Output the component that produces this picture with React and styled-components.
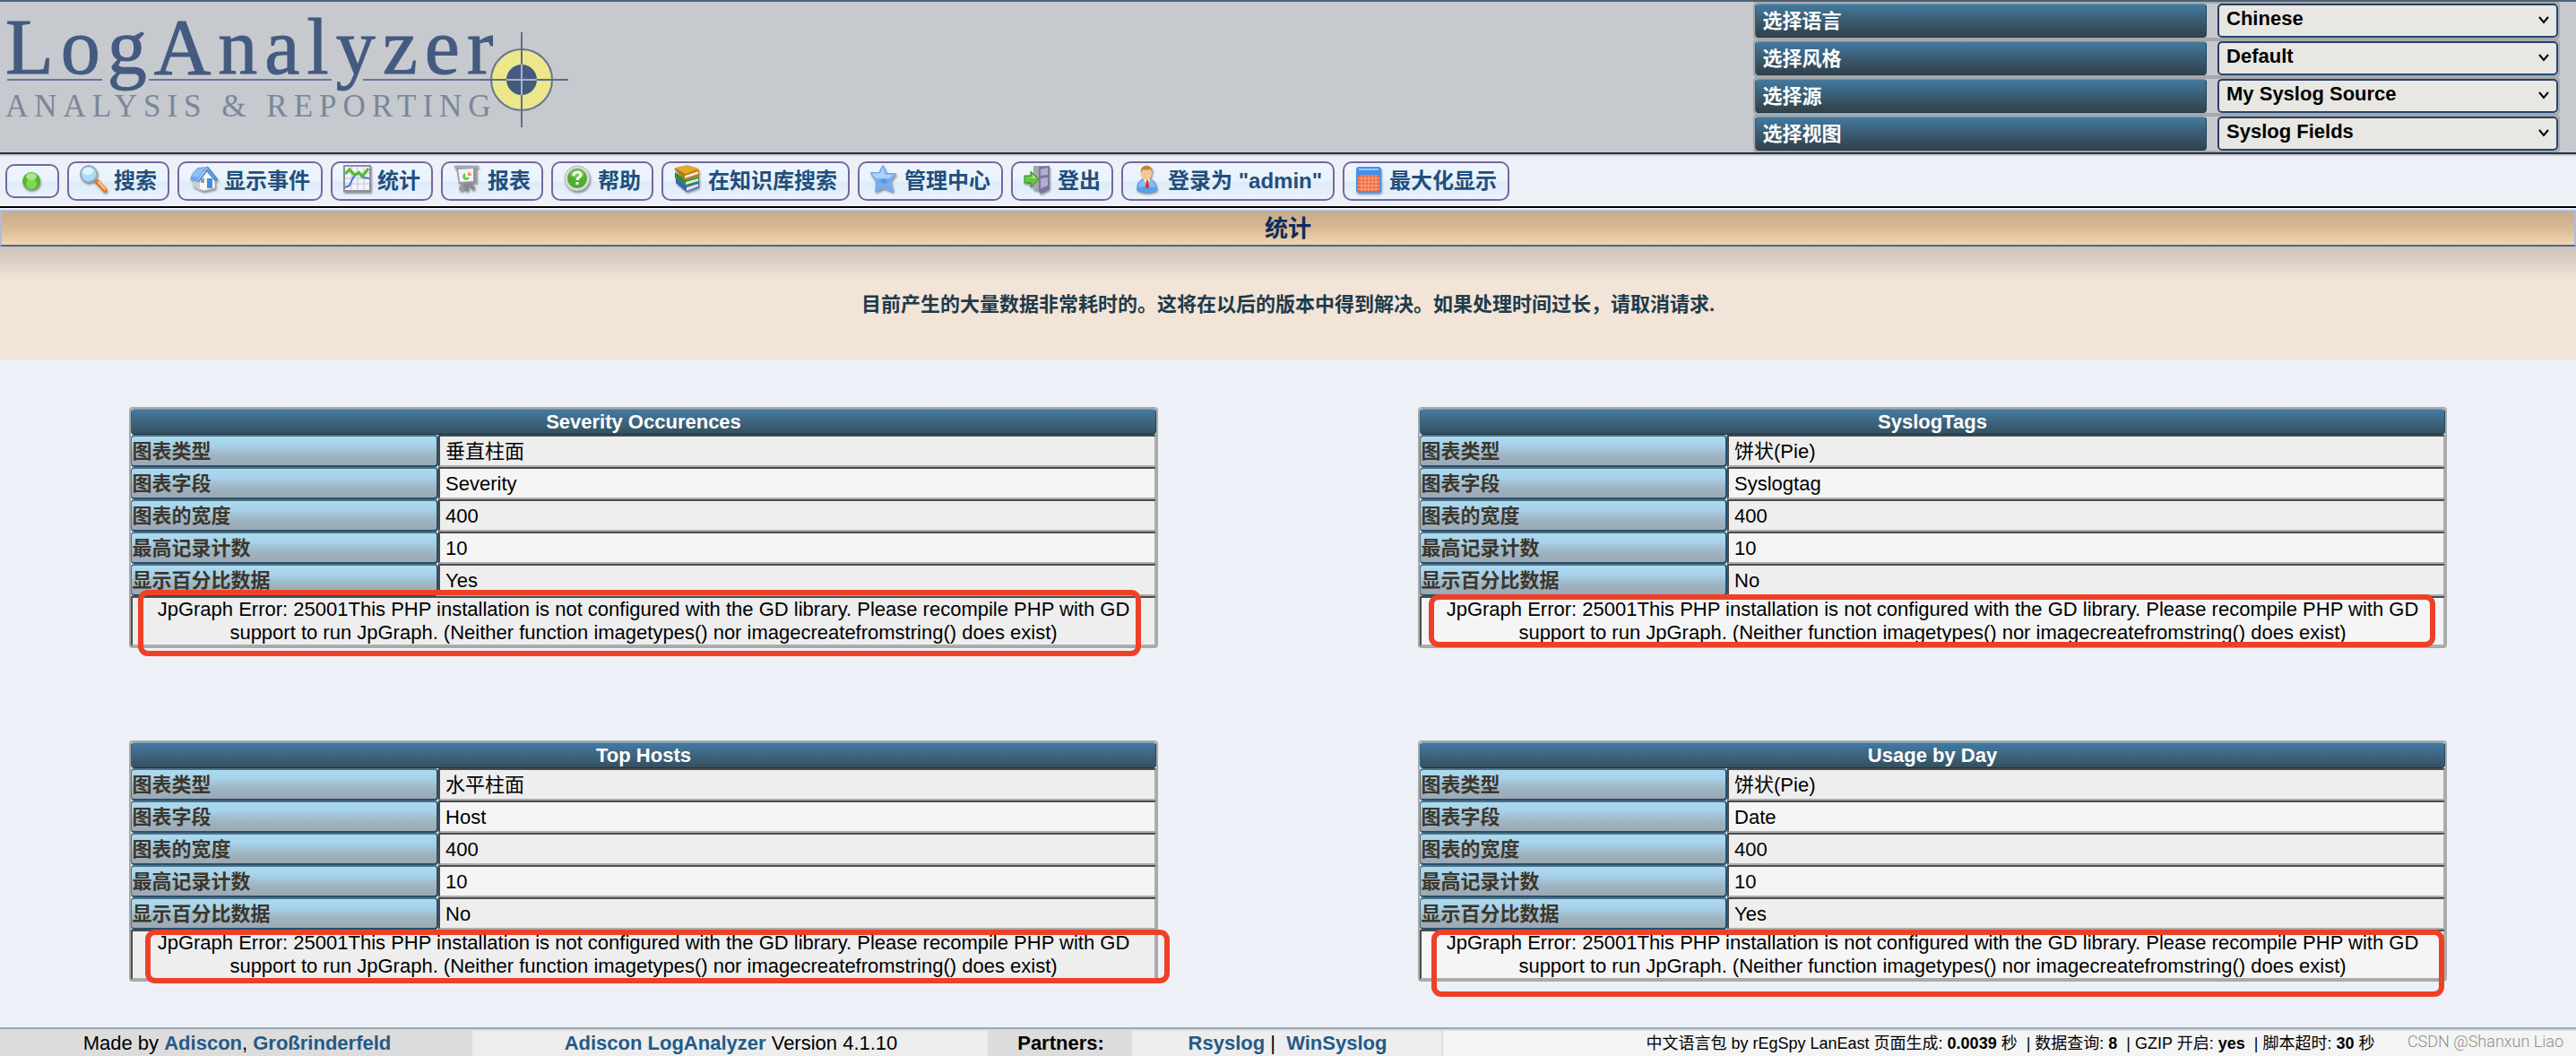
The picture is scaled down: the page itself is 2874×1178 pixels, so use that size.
import React from "react";
import styled, { createGlobalStyle } from "styled-components";

const GlobalStyle = createGlobalStyle`
  * {
    box-sizing: border-box;
  }
  body {
    margin: 0;
    background-color: #edf0f6;
    color: black;
    font-family: "Liberation Sans", "Noto Sans CJK SC", sans-serif;
    font-size: 22px;
    line-height: 26px;
  }
`;

const TopBar = styled.header`
  display: flex;
  justify-content: space-between;
  background-color: #c6c9ce;
  border-top: 2px solid #4b6178;
  border-bottom: 2px solid #222f44;
  padding-right: 18px;
`;
const LogoSvg = styled.svg`
  width: 660px;
  height: 168px;
`;
const LogoName = styled.text`
  font-family: "Liberation Serif", serif;
  font-size: 88px;
  letter-spacing: 8px;
  fill: #455a80;
  stroke: #455a80;
  stroke-width: 1px;
`;
const LogoTagline = styled.text`
  font-family: "Liberation Serif", serif;
  font-size: 35px;
  letter-spacing: 7px;
  fill: #7b8799;
`;

const Selectors = styled.div`
  width: 31.5%;
`;
const SelectorRow = styled.div`
  display: grid;
  grid-template-columns: 57fr 43fr;
  gap: 12px;
  height: 42px;
  border: 2px solid #a8a8a8;
  border-radius: 4px;
  background-color: #c6c9ce;
`;
const SelectorLabel = styled.label`
  display: flex;
  align-items: center;
  padding: 2px 7px 0;
  border: 1px solid;
  border-color: #6e9bb4 #1b4763 #16384f #2f627f;
  border-radius: 4px;
  background: linear-gradient(#437aa1, #3a5c72 50%, #344550 90%);
  color: white;
  font-weight: bold;
`;
const SelectBox = styled.div`
  position: relative;
  display: flex;
  svg {
    position: absolute;
    right: 9px;
    top: 14px;
    width: 14px;
    height: 9px;
    pointer-events: none;
  }
`;
const Select = styled.select`
  appearance: none;
  width: 100%;
  padding: 0 30px 6px 8px;
  border: 2px solid;
  border-color: #2c3e60 #1f4878 #1f4878 #2c3e60;
  border-radius: 5px;
  background-color: #e8e7e3;
  color: black;
  font-family: inherit;
  font-size: 22px;
  font-weight: bold;
`;

const Menu = styled.nav`
  display: flex;
  align-items: center;
  gap: 9px;
  height: 60px;
  padding: 0 6px;
  border-top: 2px solid #cccccc;
  border-bottom: 2px solid black;
`;
const MenuButton = styled.a`
  display: flex;
  align-items: center;
  gap: 6px;
  height: ${props => props.$small ? "38px" : "44px"};
  padding: 0 ${props => props.$small ? "16px" : "12px"};
  border: 2px solid #7468a0;
  border-radius: 10px;
  background: linear-gradient(#edf5fd, #eaf3fb 50%, #deebf8 54%, #e9f3fd);
  color: #1f4f7d;
  font-size: 24px;
  font-weight: bold;
  text-decoration: none;
  white-space: nowrap;
  svg {
    width: ${props => props.$small ? "24px" : "32px"};
    height: 32px;
    margin-bottom: ${props => props.$small ? "0" : "4px"};
    filter: drop-shadow(1px 2px 1px rgba(0, 0, 0, 0.4));
  }
  :hover {
    background-color: white;
  }
`;

const Title = styled.h1`
  margin: 2px 0 0;
  padding-top: 2px;
  border: 2px solid;
  border-color: #aebcd9 #aebcd9 #41689a #aebcd9;
  background: linear-gradient(#c5ab8b, #d8ba96 50%, #f3d5b0);
  color: #0d2c5c;
  font-size: 26px;
  line-height: 35px;
  text-align: center;
`;
const Notice = styled.p`
  margin: 0;
  padding: 52px 20px 49px;
  background: linear-gradient(#ccc2b7, #f2e4d7 38px);
  color: #203a4a;
  font-weight: bold;
  text-align: center;
`;

const Charts = styled.main`
  display: grid;
  grid-template-columns: 1fr 1fr;
  column-gap: 2px;
`;
const ChartCell = styled.section`
  padding: 52px 0 51px;
`;
const ChartCard = styled.div`
  position: relative;
  width: 80%;
  margin: 0 auto;
  border: 2px solid #a9a9a9;
  border-radius: 4px;
`;
const Table = styled.table`
  width: 100%;
  border-spacing: 0;
  table-layout: fixed;
  col:first-child {
    width: 30%;
  }
`;
const TableTitle = styled.th`
  height: 29px;
  padding: 0;
  border: 1px solid;
  border-color: #6e9bb4 #1b4763 #16384f #2f627f;
  border-radius: 4px;
  background: linear-gradient(#437aa1, #3d6580 50%, #344f5e);
  color: white;
`;
const RowName = styled.th`
  height: 36px;
  padding: 2px 0 0 1px;
  border: 2px solid;
  border-width: 2px 2px 2px 1px;
  border-color: #55707f #24516f #24516f #55707f;
  border-radius: 4px;
  background: linear-gradient(#abdaf1, #a7d2ea 30%, #9fb4c1 65%, #9ba8b5);
  color: #3c362b;
  text-align: left;
`;
const RowValue = styled.td`
  padding: 2px 6px 0;
  border: 2px solid;
  border-color: #4c4c4c #adadad #adadad #4c4c4c;
  background-color: ${props => props.$even ? "#f5f5f5" : "#eeeeee"};
`;
const ErrorCell = styled.td`
  height: 56px;
  padding: 0 24px;
  border: 2px solid;
  border-color: #4c4c4c #adadad #adadad #4c4c4c;
  background-color: ${props => props.$even ? "#f5f5f5" : "#eeeeee"};
  text-align: center;
`;
/* red frame drawn over the error row */
const Highlight = styled.div`
  position: absolute;
  inset: ${props => props.$inset};
  border: 6px solid #ee4026;
  border-radius: 11px;
  pointer-events: none;
`;

const Footer = styled.footer`
  position: relative;
  display: grid;
  grid-template-columns: 527fr 575fr 161fr 347fr 1264fr;
  border-top: 2px solid #9aa8b8;
`;
const FooterCell = styled.div`
  height: 30px;
  padding: 2px 0 0 2px;
  border-top: 2px solid #dcdcdc;
  border-right: ${props => props.$line ? "2px solid #dcdcdc" : "none"};
  background-color: ${props => props.$bg};
  font-size: ${props => props.$small ? "18px" : "22px"};
  line-height: 24px;
  text-align: center;
  white-space: pre;
`;
const FooterLink = styled.a`
  color: #235a87;
  font-weight: bold;
  text-decoration: none;
`;
const Watermark = styled.span`
  position: absolute;
  right: 14px;
  bottom: 5px;
  color: #8f8f8f;
  font-family: Roboto, sans-serif;
  font-size: 18px;
  font-weight: 300;
  line-height: 22px;
`;

const Logo = () => (
  <LogoSvg viewBox="0 2 660 168" role="img" aria-label="LogAnalyzer">
    <LogoName x="6" y="82">LogAnalyzer</LogoName>
    <g fill="#667796">
      <rect x="8" y="88" width="106" height="2" />
      <rect x="166" y="88" width="204" height="2" />
      <rect x="405" y="88" width="145" height="2" />
    </g>
    <LogoTagline x="6" y="130">ANALYSIS &amp; REPORTING</LogoTagline>
    <circle cx="582" cy="89" r="34" fill="#ebe78a" stroke="#66758c" strokeWidth="2" />
    <circle cx="582" cy="89" r="17" fill="#455a80" />
    <path d="M536 89H634M582 36V142" stroke="#5a6d90" strokeWidth="2" />
    <path d="M565 89H599M582 72V106" stroke="#a9b3c6" strokeWidth="2" />
  </LogoSvg>
);

const icons = {
  dot: (
    <svg viewBox="0 0 24 32">
      <circle cx="11" cy="16" r="10" fill="#55b52c" />
      <circle cx="11" cy="19" r="6" fill="#7fd955" />
      <ellipse cx="11" cy="11" rx="6" ry="4" fill="#a9e68c" />
    </svg>
  ),
  search: (
    <svg viewBox="0 0 32 32">
      <path d="M16 16l4 4" stroke="#8b8b92" strokeWidth="4" />
      <path d="M20 19l8 9" stroke="#e07a24" strokeWidth="5" strokeLinecap="round" />
      <path d="M21 19l7 8" stroke="#ffc890" strokeWidth="2" strokeLinecap="round" />
      <circle cx="10" cy="10" r="9" fill="#a9dcf8" stroke="#9aacbb" strokeWidth="2" />
      <ellipse cx="9" cy="7" rx="6" ry="4" fill="#dff3ff" />
    </svg>
  ),
  house: (
    <svg viewBox="0 0 32 32">
      <path d="M4 15v9l11 5 13-3V13L19 5z" fill="#f6f6f6" stroke="#b5b5b5" />
      <path d="M4 16v8l7 4V17z" fill="#cfcfcf" />
      <path d="M9 3l10-1-9 13-3 4-7-3c1-5 4-9 9-13z" fill="#6aa6ec" />
      <path d="M10 4l7-1-8 11-7-1c2-4 4-7 8-9z" fill="#8fc0f7" />
      <path d="M19 2l11 14-2 1-9-11L9 19" fill="none" stroke="#4b8ad6" strokeWidth="2" />
      <rect x="19" y="15" width="6" height="11" fill="#4a8de0" />
      <rect x="12" y="15" width="4" height="5" fill="#9a9a9a" />
    </svg>
  ),
  chart: (
    <svg viewBox="0 0 32 32">
      <rect x="1" y="1" width="29" height="28" fill="#f1f1fa" stroke="#8f8f9b" strokeWidth="2" />
      <path d="M2 9h27M2 15h27M2 21h27M9 2v26M16 2v26M23 2v26" stroke="#c4c4da" />
      <path d="M2 25l5-2 4-9 6-6 6 6 6 1" fill="none" stroke="#4576d2" strokeWidth="2" />
      <path d="M2 10l5-5 5 6 6-2 3 4 7-9" fill="none" stroke="#55bb31" strokeWidth="3" />
    </svg>
  ),
  report: (
    <svg viewBox="0 0 32 32">
      <path d="M14 20l-4 7M15 20v9M17 20l6 7" stroke="#88888d" strokeWidth="4" />
      <circle cx="9" cy="26" r="3" fill="#9c9ca1" />
      <path d="M3 3l23-1v18l-20 1z" fill="#9697a0" />
      <path d="M5 5l17-1v14L7 19z" fill="#f1f4fa" />
      <path d="M13 9a4 4 0 1 0 5 5h-5z" fill="#65c93d" />
      <path d="M16 8v4h4a4 4 0 0 0-4-4z" fill="#f29a40" />
      <path d="M2 2h25" stroke="#a9aab1" strokeWidth="3" strokeLinecap="round" />
    </svg>
  ),
  help: (
    <svg viewBox="0 0 32 32">
      <circle cx="15" cy="15" r="14" fill="#dedede" stroke="#b2b2b2" />
      <circle cx="15" cy="15" r="11" fill="#4fae2e" />
      <ellipse cx="15" cy="10" rx="8" ry="5" fill="#74c955" />
      <path d="M11 12c0-5 8-5 8-1 0 3-4 3-4 6M15 19v3" fill="none" stroke="white" strokeWidth="3" />
    </svg>
  ),
  books: (
    <svg viewBox="0 0 32 32">
      <path d="M2 20l12 10 14-5v-6L14 22 2 13z" fill="#3464b8" />
      <path d="M14 25l13-4v3l-13 5z" fill="#dfe4f0" />
      <path d="M1 14l13 10 14-5v-6L14 17 1 8z" fill="#358c35" />
      <path d="M13 19l14-4v3l-14 4z" fill="#dcebd0" />
      <path d="M0 4l12 13 16-5V6L16 2z" fill="#b77b14" />
      <path d="M12 12l15-5v3l-15 5z" fill="#f4ead0" />
      <path d="M1 3l14-3 13 4-15 6z" fill="#e2aa2e" />
    </svg>
  ),
  star: (
    <svg viewBox="0 0 32 32">
      <path d="M14 1l4 9h10l-6 8 3 11-10-4-9 4 1-11-6-9h9z" fill="#78aeee" stroke="#78aeee" strokeWidth="2" strokeLinejoin="round" />
      <path d="M14 3l3 8h9l-5 4H6l-4-5 9-1z" fill="#acd2f8" />
      <path d="M10 18l5-3 6 4-6 2z" fill="#5b97e2" />
    </svg>
  ),
  door: (
    <svg viewBox="0 0 32 32">
      <path d="M11 1h18v26l-18 1z" fill="#a5a5a9" />
      <path d="M17 2l12-1v26l-10 5-2-2z" fill="#7c76a3" />
      <path d="M19 5l8-2v8l-8 1zM19 15l8-1v9l-8 3z" fill="#b3afd0" />
      <path d="M1 12h7V7l9 9-9 9v-5H1z" fill="#66c440" stroke="#2f8b1e" />
      <path d="M2 14h8v-3l4 4z" fill="#b5ec9a" />
    </svg>
  ),
  user: (
    <svg viewBox="0 0 32 32">
      <path d="M3 28c0-9 4-13 11-13s12 4 12 13c-6 4-17 4-23 0z" fill="#5a9fea" />
      <path d="M5 25c0-5 3-8 7-9l2 8zM24 25c0-5-3-8-7-9l-2 8z" fill="#86bdf6" />
      <path d="M11 16h7l-3 8z" fill="white" />
      <path d="M14 17h2l1 7-2 3-2-3z" fill="#d9302b" />
      <ellipse cx="14" cy="9" rx="6" ry="8" fill="#f6c795" />
      <path d="M8 9c-2-11 14-11 13 0l-2-4c-4 1-7 1-9 0z" fill="#c08a35" />
    </svg>
  ),
  grid: (
    <svg viewBox="0 0 32 32">
      <rect x="2" y="3" width="26" height="27" rx="2" fill="#f0673c" stroke="#4794ec" strokeWidth="2" />
      <path d="M2 4h26v7H2z" fill="#3f8fee" />
      <path d="M4 5h22" stroke="#94c6ff" strokeWidth="2" />
      <path d="M3 15h24M3 19h24M3 23h24M3 27h24M7 11v18M11 11v18M15 11v18M19 11v18M23 11v18" stroke="#f9ad8c" />
    </svg>
  ),
};

const menu = [
  { icon: "dot", label: "" },
  { icon: "search", label: "搜索" },
  { icon: "house", label: "显示事件" },
  { icon: "chart", label: "统计" },
  { icon: "report", label: "报表" },
  { icon: "help", label: "帮助" },
  { icon: "books", label: "在知识库搜索" },
  { icon: "star", label: "管理中心" },
  { icon: "door", label: "登出" },
  { icon: "user", label: '登录为 "admin"' },
  { icon: "grid", label: "最大化显示" },
];

const selectors = [
  { id: "lang", label: "选择语言", value: "Chinese" },
  { id: "style", label: "选择风格", value: "Default" },
  { id: "source", label: "选择源", value: "My Syslog Source" },
  { id: "view", label: "选择视图", value: "Syslog Fields" },
];

const rowNames = ["图表类型", "图表字段", "图表的宽度", "最高记录计数", "显示百分比数据"];

const charts = [
  { title: "Severity Occurences", values: ["垂直柱面", "Severity", "400", "10", "Yes"], inset: "202px 17px -11px 8px" },
  { title: "SyslogTags", values: ["饼状(Pie)", "Syslogtag", "400", "10", "No"], even: true, inset: "207px 11px -1px 10px" },
  { title: "Top Hosts", values: ["水平柱面", "Host", "400", "10", "No"], inset: "209px -15px -4px 16px" },
  { title: "Usage by Day", values: ["饼状(Pie)", "Date", "400", "10", "Yes"], even: true, inset: "209px 1px -19px 13px" },
];

const errorText = "JpGraph Error: 25001This PHP installation is not configured with the GD library. Please recompile PHP with GD support to run JpGraph. (Neither function imagetypes() nor imagecreatefromstring() does exist)";

const Chart = ({ chart }) => (
  <ChartCell>
    <ChartCard>
      <Table>
        <colgroup>
          <col />
          <col />
        </colgroup>
        <thead>
          <tr><TableTitle colSpan={2}>{chart.title}</TableTitle></tr>
        </thead>
        <tbody>
          {rowNames.map((name, i) => (
            <tr key={name}>
              <RowName scope="row">{name}</RowName>
              <RowValue $even={i % 2 === 1}>{chart.values[i]}</RowValue>
            </tr>
          ))}
          <tr><ErrorCell colSpan={2} $even={chart.even}>{errorText}</ErrorCell></tr>
        </tbody>
      </Table>
      <Highlight $inset={chart.inset} />
    </ChartCard>
  </ChartCell>
);

export default function App() {
  return (
    <>
      <GlobalStyle />
      <TopBar>
        <Logo />
        <Selectors>
          {selectors.map(item => (
            <SelectorRow key={item.id}>
              <SelectorLabel htmlFor={item.id}>{item.label}</SelectorLabel>
              <SelectBox>
                <Select id={item.id} defaultValue={item.value}>
                  <option>{item.value}</option>
                </Select>
                <svg viewBox="0 0 14 9"><path d="M2 1l5 6 5-6" fill="none" stroke="black" strokeWidth="2" /></svg>
              </SelectBox>
            </SelectorRow>
          ))}
        </Selectors>
      </TopBar>
      <Menu>
        {menu.map(item => (
          <MenuButton key={item.icon} href="#" $small={!item.label}>
            {icons[item.icon]}
            {item.label}
          </MenuButton>
        ))}
      </Menu>
      <Title>统计</Title>
      <Notice>目前产生的大量数据非常耗时的。这将在以后的版本中得到解决。如果处理时间过长，请取消请求.</Notice>
      <Charts>
        {charts.map(chart => <Chart key={chart.title} chart={chart} />)}
      </Charts>
      <Footer>
        <FooterCell $bg="#dcdcdc">
          Made by <FooterLink href="#">Adiscon</FooterLink>, <FooterLink href="#">Großrinderfeld</FooterLink>
        </FooterCell>
        <FooterCell $bg="#ededed">
          <FooterLink href="#">Adiscon LogAnalyzer</FooterLink> Version 4.1.10
        </FooterCell>
        <FooterCell $bg="#dcdcdc"><b>Partners:</b></FooterCell>
        <FooterCell $bg="#ededed" $line>
          <FooterLink href="#">Rsyslog</FooterLink> |  <FooterLink href="#">WinSyslog</FooterLink>
        </FooterCell>
        <FooterCell $bg="#f4f4f4" $small>
          中文语言包 by rEgSpy LanEast 页面生成: <b>0.0039</b> 秒  | 数据查询: <b>8</b>  | GZIP 开启: <b>yes</b>  | 脚本超时: <b>30</b> 秒
        </FooterCell>
        <Watermark>CSDN @Shanxun Liao</Watermark>
      </Footer>
    </>
  );
}
